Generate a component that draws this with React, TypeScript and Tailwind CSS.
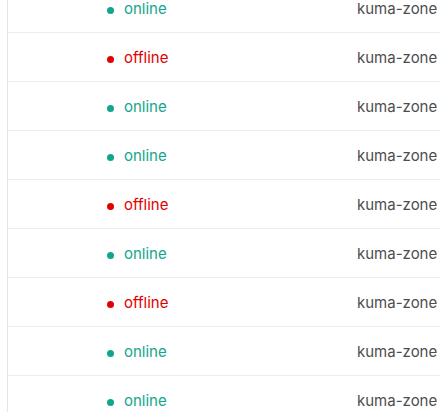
const rows = [
  "online",
  "offline",
  "online",
  "online",
  "offline",
  "online",
  "offline",
  "online",
  "online",
]

export default function App() {
  return (
    <div className="h-[412px] w-[440px] overflow-hidden bg-white font-['Inter','Liberation_Sans',sans-serif]">
      <div className="-mt-4 ml-[7px] border-l border-[#e6e6e6]">
        {rows.map((status, i) => (
          <div key={i} className="flex h-[49px] items-center border-b border-[#ececec] pt-[2px]">
            <div className="flex w-[349px] items-center gap-[10px] pl-[99px]">
              <span
                className={
                  status === "online"
                    ? "mt-[2px] h-[7px] w-[7px] rounded-full bg-[#11a68b]"
                    : "mt-[2px] h-[7px] w-[7px] rounded-full bg-[#e30000]"
                }
              />
              <span
                className={
                  status === "online" ? "text-[15px] text-[#11a68b]" : "text-[15px] text-[#e30000]"
                }
              >
                {status}
              </span>
            </div>
            <span className="whitespace-nowrap text-[15px] text-[#4d4d4d]">kuma-zone</span>
          </div>
        ))}
      </div>
    </div>
  )
}
